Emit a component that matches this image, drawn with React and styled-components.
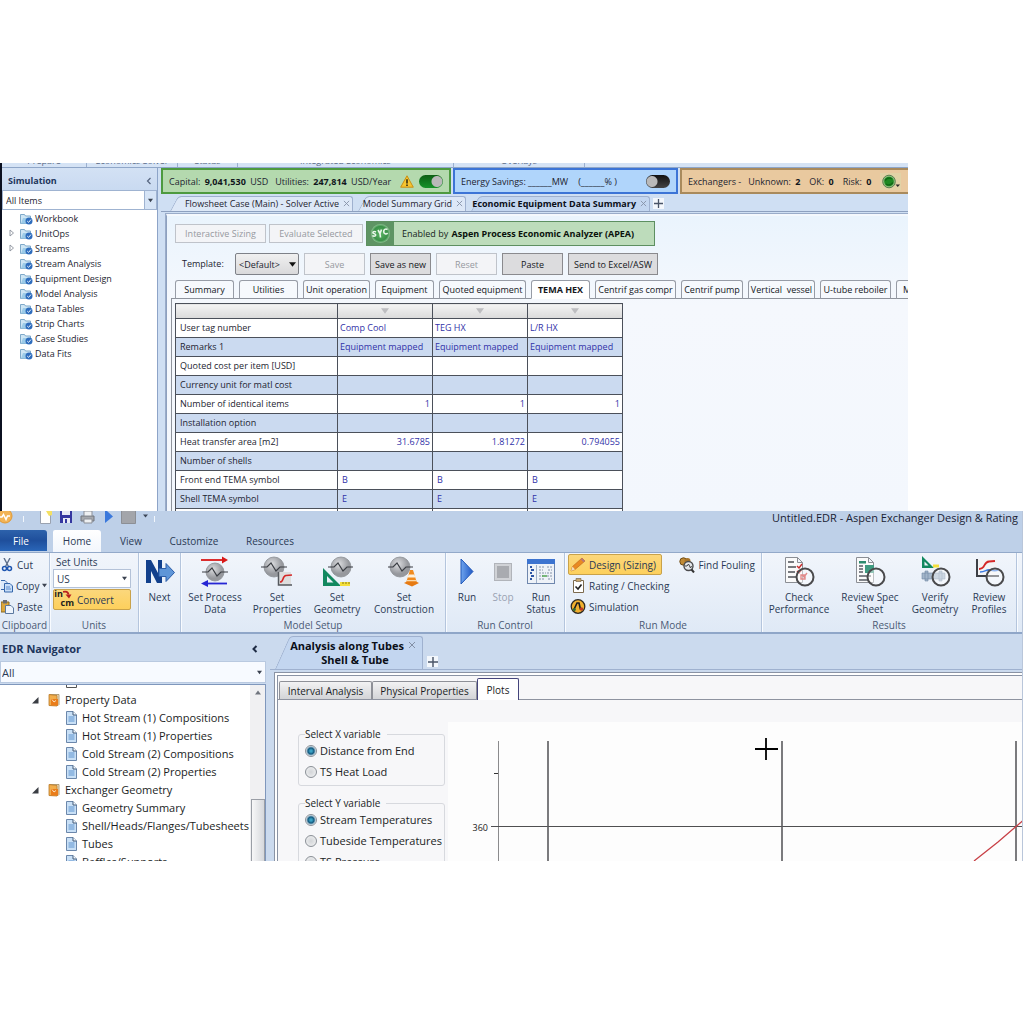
import React from 'react';
import styled, { createGlobalStyle, css } from 'styled-components';

const Global = createGlobalStyle`
  *, *::before, *::after { box-sizing: border-box; }
  body { margin: 0; background: #fff; }
  body, button, input, select { font-family: "Open Sans", "Noto Sans", sans-serif; }
  button { padding: 0; margin: 0; }
`;

const Page = styled.main`
  padding: 163px 1px 163px 0;
  overflow: hidden;
`;

/* ---------- Economics window ---------- */

const EconWindow = styled.section`
  margin-right: 115px;
  height: 348px;
  overflow: hidden;
  display: flex;
  flex-direction: column;
  border-left: 2px solid #0b1020;
  background: #cfdff3;
  font-size: 9px;
  line-height: 12px;
  color: #1d2430;
`;

const RibbonEdge = styled.div`
  flex: none;
  height: 5px;
  display: flex;
  align-items: flex-end;
  overflow: hidden;
  border-bottom: 1px solid #8fa6c8;
  background: #d5e3f5;
  color: #5a6a85;
`;

const EdgeLabel = styled.span`
  flex: 0 0 ${p => p.$w}px;
  text-align: center;
  white-space: nowrap;
  border-right: 1px solid #9bb0d0;
`;

const EconBody = styled.div`
  flex: 1;
  min-height: 0;
  display: flex;
`;

const SimPanel = styled.nav`
  flex: 0 0 156px;
  background: #fff;
  border-right: 1px solid #8da4c8;
`;

const SimHeader = styled.div`
  height: 22px;
  padding: 4px 5px 0 6px;
  display: flex;
  align-items: center;
  justify-content: space-between;
  background: linear-gradient(#d3e1f4, #c9daf1);
  color: #20355c;
  font-weight: 700;
`;

const PlainButton = styled.button`
  border: 0;
  background: none;
  color: inherit;
  font-size: inherit;
  line-height: inherit;
  display: inline-flex;
  align-items: center;
  justify-content: center;
`;

const SelectWrap = styled.label`
  display: grid;
  grid-template-columns: minmax(0, 1fr) ${p => p.$arrow || 11}px;
  align-items: center;
  height: ${p => p.$h}px;
  width: ${p => (p.$w ? `${p.$w}px` : 'auto')};
  border: 1px solid ${p => p.$line || '#9fb3d1'};
  background: ${p => p.$bg || '#fff'};
  border-radius: ${p => p.$r || 0}px;

  select {
    grid-area: 1 / 1 / 2 / 3;
    appearance: none;
    width: 100%;
    height: 100%;
    padding: 0 ${p => p.$arrow || 11}px 0 ${p => p.$pad || 3}px;
    border: 0;
    background: none;
    color: inherit;
    font-size: inherit;
  }
  svg {
    grid-area: 1 / 2;
    justify-self: center;
    pointer-events: none;
  }
`;

const SimList = styled.ul`
  margin: 0;
  padding: 1px 0 0;
  list-style: none;
`;

const SimItem = styled.li`
  height: 15px;
  padding-left: 6px;
  display: grid;
  grid-template-columns: 11px 13px 1fr;
  align-items: center;
  column-gap: 1px;

  span { padding-left: 1px; white-space: nowrap; }
`;

const EconMain = styled.div`
  flex: 1;
  min-width: 0;
  padding-left: 3px;
  display: flex;
  flex-direction: column;
`;

const StatusStrip = styled.div`
  flex: none;
  display: flex;
  gap: 2px;
  height: 26px;
`;

const tones = {
  green: ['#b4d9ae', '#4d9a3f'],
  blue: ['#b0d5fb', '#3c74d6'],
  tan: ['#e9c99f', '#a98a5c'],
};

const StatusCell = styled.div`
  flex: ${p => p.$flex};
  display: flex;
  align-items: center;
  gap: ${p => p.$gap || 3}px;
  padding: 1px 6px 0;
  white-space: nowrap;
  overflow: hidden;
  background: ${p => tones[p.$tone][0]};
  border: 2px solid ${p => tones[p.$tone][1]};
  border-right-width: ${p => (p.$tone === 'tan' ? 0 : 2)}px;

  b { font-weight: 700; color: #10151c; margin: 0 2px; }
`;

const Spacer = styled.span`
  flex: 1;
`;

const Toggle = styled.input`
  appearance: none;
  flex: none;
  margin: 0 0 0 2px;
  width: 24px;
  height: 13px;
  border-radius: 7px;
  background:
    radial-gradient(circle at 6px 50%, #b9b9b9 0 5px, transparent 6px),
    linear-gradient(#111, #444);

  &:checked {
    background:
      radial-gradient(circle at 18px 50%, #b9b9b9 0 5px, transparent 6px),
      linear-gradient(#0c5f14, #17932a);
  }
`;

const RiskButton = styled(PlainButton)`
  width: 21px;
  height: 17px;
  background: #e2d2a6;
`;

const DocTabs = styled.div`
  flex: none;
  height: 18px;
  padding-left: 4px;
  display: flex;
  align-items: flex-end;
  border-bottom: 1px solid #8da0bf;
`;

const DocTab = styled.div`
  position: relative;
  flex: 0 0 ${p => p.$w}px;
  height: ${p => p.$h || 15}px;
  display: flex;
  align-items: center;
  justify-content: flex-end;
  gap: 4px;
  padding-right: 3px;
  white-space: nowrap;
  font-weight: ${p => (p.$active ? 700 : 400)};
  color: ${p => (p.$active ? '#0b0f18' : '#1d2430')};

  &::before {
    content: "";
    position: absolute;
    inset: 0 0 0 5px;
    background: ${p => (p.$active ? '#c3d6f0' : '#dde8f7')};
    border: 1px solid #9fb1cf;
    border-bottom: 0;
    border-radius: 4px 2px 0 0;
    transform: skewX(${p => p.$skew || -28}deg);
    transform-origin: bottom;
    clip-path: inset(0 50% 0 -20px);
  }
  &::after {
    content: "";
    position: absolute;
    inset: 0 0 0 30px;
    background: ${p => (p.$active ? '#c3d6f0' : '#dde8f7')};
    border-top: 1px solid #9fb1cf;
    border-right: 1px solid #9fb1cf;
    border-radius: 0 3px 0 0;
  }
  > * { position: relative; z-index: 1; }
`;

const AddTab = styled(PlainButton)`
  margin: 0 0 2px ${p => p.$ml}px;
  width: 11px;
  height: 11px;
  background: #f3f7fc;
  color: #39465c;
`;

const EconFrame = styled.div`
  flex: 1;
  min-height: 0;
  margin: 2px 0 0 5px;
  border-top: 2px solid #f4f8fd;
  border-left: 1px solid #8da0bf;
  outline: 1px solid #9aacc9;
  padding: 5px 0 0 4px;
  background: linear-gradient(#eaf4fd, #f5f8fd 90px, #f3f7fd);
  overflow: hidden;
`;

const ToolRow = styled.div`
  display: flex;
  align-items: center;
  padding-left: ${p => p.$pl}px;
  margin-bottom: ${p => p.$mb}px;
  height: ${p => p.$h}px;
  gap: ${p => p.$gap || 5}px;
`;

const ToolButton = styled.button`
  flex: none;
  width: ${p => p.$w}px;
  height: ${p => p.$h || 22}px;
  border: 1px solid #8a8a8e;
  background: #dcdcde;
  color: #14171c;
  font-size: 9px;
  white-space: nowrap;

  &:disabled {
    border-color: #bfc3ca;
    background: #f3f4f7;
    color: #9699a0;
  }
`;

const ApeaBadge = styled.div`
  display: flex;
  align-items: center;
  gap: 8px;
  width: 289px;
  height: 25px;
  border: 1px solid #5d8f61;
  background: #bddcbb;
  color: #17251b;
  white-space: nowrap;

  b { color: #0a120c; margin-left: 1px; }
`;

const RowLabel = styled.span`
  width: 48px;
`;

const EquipTabs = styled.div`
  display: flex;
  gap: 5px;
  padding-left: 4px;
  height: 19px;
  border-bottom: 1px solid #8e939c;
`;

const EquipTab = styled.button`
  flex: 0 0 ${p => p.$w}px;
  height: 19px;
  border: 1px solid #979ca6;
  border-bottom-color: ${p => (p.$active ? '#fff' : '#8e939c')};
  border-radius: 3px 3px 0 0;
  background: ${p => (p.$active ? '#fff' : '#f6f9fd')};
  font-size: 9px;
  font-weight: ${p => (p.$active ? 700 : 400)};
  color: #14171c;
  white-space: pre;
  overflow: hidden;
`;

const GridPane = styled.div`
  border-left: 1px solid #8e939c;
  padding: 4px 0 0 3px;
`;

const EquipGrid = styled.table`
  table-layout: fixed;
  width: 448px;
  border-collapse: collapse;

  th, td {
    height: 19px;
    padding: 0 4px;
    border: 1px solid #4b505a;
    line-height: 12px;
    font-weight: 400;
    text-align: left;
    white-space: nowrap;
  }
  thead th {
    height: 15px;
    padding: 0;
    text-align: center;
    line-height: 8px;
    background: linear-gradient(#f4f4f4, #dadada);
  }
  tbody tr { background: #fff; }
  tbody tr:nth-child(even) { background: #cbdaf0; }
  td { color: #3232a8; padding: 0 2px; }
`;

const NumCell = styled.td`
  && { text-align: right; }
`;
const SymCell = styled.td`
  && { padding-left: 4px; }
`;

/* ---------- Exchanger window ---------- */

const EdrWindow = styled.section`
  height: 350px;
  overflow: hidden;
  display: flex;
  flex-direction: column;
  background: #cbdaee;
  font-size: 10px;
  line-height: 12px;
  color: #2b3a55;
  border-right: 1px solid #b9c6da;
`;

const TitleBar = styled.div`
  flex: none;
  height: 19px;
  display: flex;
  justify-content: space-between;
  background: #bed0e8;
`;

const QuickBar = styled.div`
  display: flex;
  align-items: flex-start;
  height: 14px;
`;

const TitleText = styled.h1`
  margin: 0;
  padding-right: 4px;
  font-size: 11px;
  line-height: 13px;
  font-weight: 400;
  color: #1a2233;
  white-space: nowrap;
`;

const RibbonTabs = styled.div`
  flex: none;
  display: flex;
  height: 22px;
  gap: 6px;
  background: #bed0e8;
`;

const RibbonTab = styled.button`
  flex: 0 0 ${p => p.$w}px;
  height: 22px;
  border: 0;
  border-radius: 2px 3px 0 0;
  background: none;
  font-size: 10px;
  color: #2b3a55;
  ${p => p.$file && css`
    height: 21px;
    padding-right: 5px;
    background: linear-gradient(#2d62ab, #1f4f9c 50%, #2a66b8);
    color: #fff;
    border-radius: 0 3px 0 0;
  `}
  ${p => p.$active && css`
    background: linear-gradient(#fff, #f2f6fc);
  `}
`;

const Ribbon = styled.div`
  flex: none;
  height: 82px;
  display: flex;
  border-top: 1px solid #93a9c9;
  border-bottom: 2px solid #8fa6c8;
  background: linear-gradient(#f1f5fb, #dfe9f6);
`;

const Group = styled.div`
  flex: 0 0 ${p => p.$w}px;
  display: flex;
  flex-direction: column;
  overflow: hidden;
  border-right: 1px solid #b4c5dd;
  box-shadow: 1px 0 0 #f8fbff;
`;

const GroupBody = styled.div`
  flex: 1;
  display: flex;
  justify-content: ${p => p.$justify || 'center'};
  padding: ${p => p.$pad || '3px 0 0'};
`;

const GroupLabel = styled.div`
  height: 14px;
  line-height: 14px;
  text-align: center;
  white-space: nowrap;
  color: #4b5a75;
`;

const Stack = styled.div`
  display: flex;
  flex-direction: column;
  gap: ${p => p.$gap || 0}px;
`;

const SmallButton = styled.button`
  display: inline-flex;
  align-items: center;
  align-self: flex-start;
  gap: 3px;
  height: 21px;
  width: ${p => (p.$w ? `${p.$w}px` : 'auto')};
  padding: 0 ${p => p.$px || 0}px;
  border: 1px solid ${p => (p.$on ? '#c9a24a' : 'transparent')};
  background: ${p => (p.$on ? 'linear-gradient(#fbd77c, #fdd05c)' : 'none')};
  border-radius: 2px;
  color: #2b3a55;
  font-size: 10px;
  white-space: nowrap;

  svg { flex: none; }
`;

const BigButton = styled.button`
  flex: 0 0 ${p => p.$w}px;
  display: flex;
  flex-direction: column;
  align-items: center;
  gap: 3px;
  border: 0;
  background: none;
  color: #2b3a55;
  font-size: 10px;
  line-height: 12px;

  span { white-space: pre; }
  &:disabled { color: #9aa3b3; }
`;

const FieldText = styled.span`
  padding-left: 3px;
`;

const InCm = styled.span`
  display: grid;
  grid-template-columns: 9px 11px;
  font-size: 9px;
  line-height: 8px;
  font-weight: 700;
  color: #1c1c1c;
  padding-bottom: 2px;
  i { font-style: normal; grid-column: 1 / 3; text-align: right; }
`;

const EdrBody = styled.div`
  flex: 1;
  min-height: 0;
  display: flex;
  font-size: 11px;
  line-height: 14px;
`;

const Navigator = styled.nav`
  flex: 0 0 266px;
  display: flex;
  flex-direction: column;
`;

const NavHeader = styled.div`
  flex: none;
  height: 27px;
  padding: 3px 8px 0 2px;
  display: flex;
  align-items: center;
  justify-content: space-between;
  font-weight: 700;
  color: #20355c;
`;

const TreePane = styled.div`
  flex: 1;
  min-height: 0;
  display: flex;
  margin-top: 1px;
  border: 1px solid #7f97bc;
  border-left: 0;
  border-bottom: 0;
  background: #fff;
  color: #1a1d24;
  overflow: hidden;
`;

const Tree = styled.ul`
  flex: 1;
  margin: 0;
  padding: 0;
  list-style: none;
  overflow: hidden;
`;

const TreeRow = styled.li`
  height: ${p => (p.$cut ? 6 : 18)}px;
  display: flex;
  align-items: ${p => (p.$cut ? 'flex-start' : 'center')};
  gap: 5px;
  padding-left: ${p => (p.$leaf ? 66 : 31)}px;
  white-space: nowrap;
  svg { flex: none; }
`;

const BookSlot = styled.span`
  display: flex;
  padding-left: 4px;
`;

const ScrollBar = styled.div`
  flex: 0 0 15px;
  display: flex;
  flex-direction: column;
  background: #f0f0f2;
`;

const ScrollUp = styled(PlainButton)`
  height: 15px;
`;

const ScrollThumb = styled.div`
  flex: 1;
  margin: 99px 0 0 1px;
  border: 1px solid #9a9ea6;
  border-bottom: 0;
  background: linear-gradient(90deg, #f7f7f8, #d6d8dc);
`;

const Workspace = styled.div`
  flex: 1;
  min-width: 0;
  display: flex;
  flex-direction: column;
  padding-left: 4px;
`;

const WorkTabs = styled.div`
  flex: none;
  height: 36px;
  display: flex;
  align-items: flex-end;
  border-bottom: 1px solid #9fb1cf;
`;

const WorkTitle = styled.div`
  text-align: center;
  line-height: 14px;
  white-space: nowrap;
  span { padding-left: 16px; }
`;

const CloseTab = styled(PlainButton)`
  color: #7d8ba3;
`;

const TopClose = styled(CloseTab)`
  align-self: flex-start;
  padding: 5px 4px 0 0;
`;

const WorkFrame = styled.div`
  flex: 1;
  min-height: 0;
  margin: 2px 0 0 4px;
  border: 1px solid #8a93a4;
  border-right: 0;
  border-bottom: 0;
  padding: 2px 0 0 2px;
  background: #fff;
  display: flex;
`;

const WorkInner = styled.div`
  flex: 1;
  min-width: 0;
  border: 1px solid #8a93a4;
  border-right: 0;
  border-bottom: 0;
  display: flex;
  flex-direction: column;
  background: #f7f7f9;
  overflow: hidden;
  color: #1a1d24;
`;

const SubTabs = styled.div`
  flex: none;
  height: 24px;
  padding-left: 1px;
  display: flex;
  align-items: flex-end;
  border-bottom: 1px solid #8e93a0;
`;

const SubTab = styled.button`
  flex: 0 0 ${p => p.$w}px;
  height: ${p => (p.$active ? 22 : 18)}px;
  margin-bottom: ${p => (p.$active ? -1 : 0)}px;
  border: 1px solid ${p => (p.$active ? '#45457c' : '#8e9097')};
  border-bottom: 0;
  border-radius: 2px 2px 0 0;
  background: ${p => (p.$active ? '#fff' : 'linear-gradient(#f2f2f3, #d3d4d7)')};
  color: #1a1d24;
  font-size: 10px;
  white-space: nowrap;
`;

const PlotArea = styled.div`
  flex: 1;
  min-height: 0;
  display: flex;
  padding: 22px 0 0 20px;
  gap: 3px;
`;

const Options = styled.div`
  flex: 0 0 147px;
  display: flex;
  flex-direction: column;
  gap: 11px;
  padding-top: 6px;
`;

const OptionSet = styled.fieldset`
  margin: 0;
  padding: 0 0 3px 6px;
  border: 1px solid #d7d9de;
  border-radius: 3px;
  font-size: 10px;

  legend { padding: 0 6px 0 0; line-height: 12px; }
`;

const Option = styled.label`
  display: flex;
  align-items: center;
  gap: 3px;
  height: 21px;
  font-size: 11px;
  white-space: nowrap;
`;

const Radio = styled.input`
  appearance: none;
  margin: 0;
  width: 12px;
  height: 12px;
  flex: none;
  border: 1px solid #8b9097;
  border-radius: 50%;
  background: radial-gradient(circle, #d3d5d8, #f3f4f5);

  &:checked {
    background: radial-gradient(circle at 50% 50%, #3aa3c6 0 1px, #145a80 3px, #e4ecf2 5px);
  }
`;

const ChartBox = styled.div`
  flex: 1;
  min-width: 0;
  background: #fdfdfd;
  overflow: hidden;
  svg { display: block; }
`;

/* ---------- Drawings ---------- */

const Down = ({ s = 5, c = '#3b4250' }) => (
  <svg width={s} height={s} viewBox="0 0 6 6"><path d="M0 1h6L3 5z" fill={c} /></svg>
);
const Cross = ({ s = 7 }) => (
  <svg width={s} height={s} viewBox="0 0 8 8"><path d="M1 1l6 6M7 1L1 7" stroke="#8390a6" strokeWidth="1" /></svg>
);
const Plus = ({ s = 9 }) => (
  <svg width={s} height={s} viewBox="0 0 9 9"><path d="M4.5 0v9M0 4.5h9" stroke="#4a5568" strokeWidth="1.3" /></svg>
);
const Chevron = ({ w = 1.2, c = '#56657f' }) => (
  <svg width="6" height="8" viewBox="0 0 6 8"><path d="M4.5 1L1.5 4l3 3" fill="none" stroke={c} strokeWidth={w} /></svg>
);
const FolderCheck = () => (
  <svg width="13" height="12" viewBox="0 0 13 12">
    <path d="M.5 10.5v-9h4l1 1.5h5v7.500z" fill="#cfe6f4" stroke="#7fa9c9" />
    <path d="M1 10.500L3 5h9l-2 5.500z" fill="#9ccbe8" />
    <circle cx="9" cy="8" r="3.500" fill="#2f6dbd" />
    <path d="M7.200 8l1.400 1.400L11 6.500" fill="none" stroke="#e8f2fc" strokeWidth="1" />
  </svg>
);
const Warning = () => (
  <svg width="14" height="13" viewBox="0 0 14 13">
    <path d="M7 .8L13.300 12.200H.7z" fill="#f6c52f" stroke="#c98f16" />
    <path d="M7 4.200v4.300M7 9.600v1.500" stroke="#2b2410" strokeWidth="1.500" />
  </svg>
);
const RiskDial = () => (
  <svg width="20" height="16" viewBox="0 0 20 16">
    <circle cx="8" cy="7.500" r="6.300" fill="#8fbf7d" stroke="#5b7f52" />
    <circle cx="8" cy="7.500" r="4.800" fill="#1c8a22" />
    <path d="M4 6.500c2-2.500 5-3 7-1.500M12 8.500c-2 2.500-5 3-7 1.500" fill="none" stroke="#0f6a17" strokeWidth="1.500" />
    <path d="M14.500 10.500h4.500l-2.250 2.500z" fill="#2b2b2b" />
  </svg>
);
const Sync = () => (
  <svg width="27" height="23" viewBox="0 0 27 23">
    <defs><radialGradient id="sync"><stop offset="0" stopColor="#5bb565" /><stop offset=".75" stopColor="#3b9149" /><stop offset="1" stopColor="#8cc492" /></radialGradient></defs>
    <rect width="27" height="23" fill="#5e9464" />
    <circle cx="13.500" cy="11.500" r="9.500" fill="url(#sync)" />
    <path d="M9 10c-2-1-3.500 0-3 1s3 .7 2.700 2.200-2.700 1.300-3.200.2M11 8l2 3.500 1.500-4M13 11.500l.5 4M20.500 7.500c-2-1.200-4 0-3.800 2.200s2.300 3 4 1.500" fill="none" stroke="#e9f6ea" strokeWidth="1.600" />
  </svg>
);
const Caret = ({ open }) => (
  <svg width="8" height="8" viewBox="0 0 8 8">
    {open ? <path d="M7.500 1v6.500H1z" fill="#3a3d44" /> : <path d="M2 1l3.500 3L2 7z" fill="#fff" stroke="#8b919c" strokeWidth=".9" />}
  </svg>
);
const Book = () => (
  <svg width="12" height="14" viewBox="0 0 12 14">
    <path d="M2 1.500h9v10l-1 1H2z" fill="#efe0c2" stroke="#a08a60" strokeWidth=".8" />
    <path d="M1 1.500l8 1v10.500L1 12.500z" fill="#f2ae4c" stroke="#b87828" strokeWidth=".8" />
    <path d="M3 6h7v6.500H3z" fill="#ea7d1b" /><path d="M4 6.500l2 2.500 2-1.500" stroke="#fbe3c0" fill="none" />
  </svg>
);
const Doc = () => (
  <svg width="11" height="14" viewBox="0 0 11 14">
    <path d="M.5.5H7L10.500 4v9.500H.5z" fill="#c9e0f6" stroke="#6b87ab" />
    <path d="M7 .5V4h3.500" fill="#fff" stroke="#3f5878" />
    <path d="M2.500 6h6M2.500 8h6M2.500 10h6" stroke="#5c93cf" />
  </svg>
);
const Exchanger = ({ x, y, r = 10 }) => (
  <g transform={`translate(${x} ${y})`}>
    <circle r={r} fill="url(#ball)" stroke="#8c8f94" strokeWidth=".8" />
    <path d="M-13 0h6l4-4 5 8 4-4h7" fill="none" stroke="#3c3f45" strokeWidth="1.200" />
  </g>
);
const Defs = () => (
  <defs>
    <radialGradient id="ball" cx=".4" cy=".35"><stop offset="0" stopColor="#dcdde0" /><stop offset="1" stopColor="#96989d" /></radialGradient>
    <linearGradient id="blueFill" x2="1"><stop offset="0" stopColor="#6ea4ee" /><stop offset="1" stopColor="#1f57c4" /></linearGradient>
  </defs>
);
const Art = ({ w = 32, children }) => (
  <svg width={w} height="32" viewBox={`0 0 ${w} 32`}><Defs />{children}</svg>
);
const NextArt = () => (
  <Art>
    <path d="M2 27V4h5l7 13V4h4v23h-5L7 15v12z" fill="#12408c" />
    <path d="M15 12.500h7V7.500l8.500 9-8.500 9v-5h-7z" fill="#5f96d8" stroke="#2c5da8" />
  </Art>
);
const ProcessArt = () => (
  <Art>
    <path d="M2 4h23" stroke="#d81818" strokeWidth="1.800" /><path d="M23 .5l6 3.500-6 3.500z" fill="#d81818" />
    <Exchanger x={16} y={16} r={9} />
    <path d="M7 27.500h21" stroke="#2626d4" strokeWidth="1.800" /><path d="M9 24l-7 3.500 7 3.500z" fill="#2626d4" />
  </Art>
);
const PropertiesArt = () => (
  <Art><Exchanger x={13} y={11} /><rect x="17" y="16" width="13" height="13" fill="#dedede" /><path d="M17.500 16v13H31" fill="none" stroke="#55585e" strokeWidth="1.500" /><path d="M19 26c4 0 2-6 6-6.500l6-.5" fill="none" stroke="#d42626" strokeWidth="1.600" /></Art>
);
const GeometryArt = () => (
  <Art><Exchanger x={20} y={11} /><path fillRule="evenodd" d="M2 12v18h18zM6 20v6.500h6.500z" fill="#12885f" /><path d="M19 26h10v4H19z" fill="#f4df3c" /><path d="M22 26v2M25 26v2M28 26v2" stroke="#8b7d10" /></Art>
);
const ConstructionArt = () => (
  <Art><Exchanger x={12} y={11} /><path d="M22 14h3l4 13H18z" fill="#f08a1e" /><path d="M20.500 18.500h6l.9 3h-7.800z" fill="#fff0d8" /><path d="M19 24h9l.6 1.500H18.500z" fill="#fbd9a8" /><path d="M16 27l3-1.500h9l3 1.500-7 3.500z" fill="#e67a12" /></Art>
);
const RunArt = () => <Art><path d="M10 3l12 12.500L10 28z" fill="url(#blueFill)" stroke="#1f56b8" /></Art>;
const StopArt = () => <Art><rect x="7.500" y="7.500" width="17" height="17" fill="#d0d2d6" stroke="#b1b4ba" /><rect x="10" y="10" width="12" height="12" fill="#a9abb0" /></Art>;
const StatusArt = () => (
  <Art><rect x="2.500" y="3.500" width="27" height="24" fill="#eef2f8" stroke="#6f87ad" /><path d="M2 3h28v5H2z" fill="#3d74d0" /><path d="M5 11h2M6 14h3M5 17h2M6 20h3M5 23h2" stroke="#2d55a5" strokeWidth="1.800" /><path d="M11.500 9v18" stroke="#9fb0c8" /><path d="M14 11h6M14 14h4M14 17h7M14 20h4M14 23h6M22 11h5M23 14h4M22 17h5M22 20h5M23 23h4" stroke="#8492a8" strokeDasharray="2 1" /><path d="M17 20h5" stroke="#51a351" strokeWidth="1.500" /></Art>
);
const Lens = () => <circle cx="22" cy="21" r="8.500" fill="#fff" fillOpacity=".45" stroke="#4a4a4c" strokeWidth="2" />;
const Sheet = () => <path d="M2.500 1.500h12l5 5v20h-17zM14.500 1.500v5h5" fill="#fafafa" stroke="#8b8e94" />;
const CheckArt = () => (
  <Art><Sheet /><path d="M5 6h6M5 11h8M5 16h7M5 21h8" stroke="#4d5056" strokeWidth="1.600" /><path d="M14 10l2 2 3-4M14 15l2 2 3-4M18 23v-4h4v4zM19 19l2 2 3-4" fill="none" stroke="#c92b2b" strokeWidth="1.400" /><Lens /></Art>
);
const SpecArt = () => (
  <Art><Sheet /><path d="M5 5h7v2.500H5z" fill="#2c8b6e" /><path d="M11 9h9v8h-9z" fill="#3f9a80" /><path d="M5 10h4M5 13h4M5 16h4M5 20h12M5 24h10" stroke="#5a5e66" strokeWidth="1.400" /><Lens /></Art>
);
const VerifyArt = () => (
  <Art><path fillRule="evenodd" d="M3 0v12h12zM5.500 5.500V9.500H9.500z" fill="#12885f" /><path d="M14 8.500h6v3h-6z" fill="#f4df3c" /><path d="M3 17h23v6H3zM6 15h3v10H6zM20 15h3v10h-3z" fill="#a3b6ca" stroke="#6f88a3" strokeWidth=".6" /><Lens /></Art>
);
const ProfilesArt = () => (
  <Art><path d="M4 3h20v17H4z" fill="#f3f3f5" /><path d="M4 3v17h22" fill="none" stroke="#3c3f45" strokeWidth="2" /><path d="M6 13c7 0 4-7 10-7.500l6-.5" fill="none" stroke="#d42626" strokeWidth="1.800" /><path d="M7 16c6 0 6-3 10-2s6 1 8 0" fill="none" stroke="#3d7be0" strokeWidth="1.600" /><Lens /></Art>
);
const Scissors = () => (
  <svg width="13" height="14" viewBox="0 0 13 14"><path d="M3 0l4.500 8.500M9 0L4.500 8.500" stroke="#5e6f8a" strokeWidth="1.400" /><circle cx="3.500" cy="10.500" r="2" fill="none" stroke="#1f56b0" strokeWidth="1.500" /><circle cx="8.500" cy="10.500" r="2" fill="none" stroke="#1f56b0" strokeWidth="1.500" /></svg>
);
const CopyIcon = () => (
  <svg width="12" height="14" viewBox="0 0 12 14"><path d="M0 1.500h4l2 2v7H0" fill="#dceafa" stroke="#3567ab" /><path d="M3.500 4.500H9l2.500 2.500v6h-8z" fill="#c7ddf7" stroke="#3567ab" /><path d="M5 8h4M5 10h5" stroke="#5a8ccd" /></svg>
);
const PasteIcon = () => (
  <svg width="13" height="14" viewBox="0 0 13 14"><path d="M0 2h8v10H0z" fill="#dca73c" stroke="#8a6a25" /><path d="M2 0h4v3.500H2z" fill="#6a6d74" /><path d="M4.500 5.500H10l2.500 2.500v5.500h-8z" fill="#eef4fc" stroke="#5b789f" /></svg>
);
const PencilIcon = () => (
  <svg width="16" height="15" viewBox="0 0 16 15"><path d="M1 14l1.500-4.500L12 1l3 3L5 12.500z" fill="#e98a22" stroke="#b9631a" strokeWidth=".6" /><path d="M12 1l3 3-1.500 1.300-3-3z" fill="#b87878" /><path d="M1 14l1.500-4.500L5 12.500z" fill="#f0dcb8" /></svg>
);
const ClipboardIcon = () => (
  <svg width="16" height="15" viewBox="0 0 16 15"><path d="M3.500 2.500h10v12h-10z" fill="#fff" stroke="#7c6a4e" /><path d="M6 .5h5v3H6z" fill="#c9a66c" stroke="#7c6a4e" strokeWidth=".7" /><path d="M5.500 8.500l2.500 2.500 3.500-4.500" fill="none" stroke="#222" strokeWidth="1.600" /></svg>
);
const SimulationIcon = () => (
  <svg width="16" height="15" viewBox="0 0 16 15"><circle cx="8" cy="7.500" r="6.800" fill="#f0b02f" stroke="#2e2a22" strokeWidth="1.300" /><path d="M4 10.500L7 4l2 0 1.500 6.500" fill="none" stroke="#1c1c1c" strokeWidth="1.600" /><circle cx="4.300" cy="10.500" r="1.500" fill="#2f6e34" /><circle cx="11.500" cy="10" r="1.700" fill="#c23a22" /></svg>
);
const FoulingIcon = () => (
  <svg width="16" height="16" viewBox="0 0 16 16"><circle cx="4.500" cy="4.500" r="3.700" fill="#c08a35" stroke="#6e4c18" /><circle cx="8.500" cy="4" r="3" fill="#a8752b" /><circle cx="9.500" cy="9" r="4.500" fill="#e4e6ea" stroke="#4b4b4d" strokeWidth="1.400" /><path d="M6 9h2l1.500-2 2 4 1-2" stroke="#444" fill="none" /><path d="M12.500 12.500l2.500 3" stroke="#333" strokeWidth="2" /></svg>
);
const ConvertArrow = () => (
  <svg width="10" height="9" viewBox="0 0 10 9"><path d="M0 2c3-1 5 0 5.500 2.500" fill="none" stroke="#b82020" strokeWidth="1.800" /><path d="M2.500 4.500h6l-2.500 4z" fill="#b82020" /></svg>
);
const QuickIcons = () => (
  <svg width="155" height="14" viewBox="0 0 155 14">
    <circle cx="5" cy="5" r="7" fill="#f2b355" stroke="#e19a35" /><path d="M0 6h2l1.500-2.500L6 8.500 7.500 5H10" stroke="#fff" fill="none" strokeWidth="1.500" />
    <path d="M23.500 5v6" stroke="#f1f6fc" />
    <path d="M40.500 0v12.500h10V0" fill="#fff" stroke="#9aa2b0" /><path d="M46 0h6v4l-3 1z" fill="#f4e063" />
    <path d="M60 0v12h12V0z" fill="#3537a0" /><path d="M62 0h8v4h-8zM63 7h7v5h-7z" fill="#e8eaf5" /><path d="M65 8h2v4h-2z" fill="#3537a0" />
    <path d="M81 5h13v5H81z" fill="#a5a8ad" stroke="#70747c" /><path d="M84 0h8v5h-8zM84 8h8v4h-8z" fill="#eef0f2" stroke="#8b8f97" />
    <path d="M105 0v12l8-6.500L107 0z" fill="#3a78dc" />
    <path d="M121.500 0v12.500h14V0" fill="#a3a5aa" stroke="#8c8f95" />
    <path d="M143 3.500h5l-2.500 3z" fill="#3c4556" /><path d="M154.500 5v6" stroke="#f1f6fc" />
  </svg>
);

const Chart = () => (
  <svg width="575" height="139" viewBox="0 0 575 139">
    <path d="M50.500 19v120" stroke="#8b8b8d" />
    <path d="M46 51.500h4" stroke="#333" />
    <path d="M43 104.500h532" stroke="#4f4f51" />
    <path d="M100 19v120M334 19v120M568 19v120" stroke="#5b5b5e" strokeWidth="1.600" />
    <path d="M526 139l24-19 18-15.500 7-6" fill="none" stroke="#c84046" strokeWidth="1.300" />
    <path d="M318 16v22M307 27h23" stroke="#000" strokeWidth="1.800" />
    <text x="40" y="109" textAnchor="end" fontSize="9" fontFamily="Open Sans, sans-serif" fill="#222">360</text>
  </svg>
);

/* ---------- Data ---------- */

const edgeLabels = [['Prepare', 85], ['Economics Solver', 91], ['Status', 60], ['Integrated Economics', 216], ['Overlays', 131]];
const simItems = ['Workbook', 'UnitOps', 'Streams', 'Stream Analysis', 'Equipment Design', 'Model Analysis', 'Data Tables', 'Strip Charts', 'Case Studies', 'Data Fits'];
const equipTabs = [['Summary', 59], ['Utilities', 59], ['Unit operation', 67], ['Equipment', 59], ['Quoted equipment', 87], ['TEMA HEX', 59], ['Centrif gas compr', 81], ['Centrif pump', 62], ['Vertical  vessel', 67], ['U-tube reboiler', 71], ['Multi stage', 60]];
const gridRows = [
  ['User tag number', 'text', 'Comp Cool', 'TEG HX', 'L/R HX'],
  ['Remarks 1', 'text', 'Equipment mapped', 'Equipment mapped', 'Equipment mapped'],
  ['Quoted cost per item [USD]', 'text', '', '', ''],
  ['Currency unit for matl cost', 'text', '', '', ''],
  ['Number of identical items', 'num', '1', '1', '1'],
  ['Installation option', 'text', '', '', ''],
  ['Heat transfer area [m2]', 'num', '31.6785', '1.81272', '0.794055'],
  ['Number of shells', 'text', '', '', ''],
  ['Front end TEMA symbol', 'sym', 'B', 'B', 'B'],
  ['Shell TEMA symbol', 'sym', 'E', 'E', 'E'],
  ['', 'text', '', '', ''],
];
const cellKinds = { text: 'td', num: NumCell, sym: SymCell };
const tree = [
  ['Property Data', false],
  ['Hot Stream (1) Compositions', true],
  ['Hot Stream (1) Properties', true],
  ['Cold Stream (2) Compositions', true],
  ['Cold Stream (2) Properties', true],
  ['Exchanger Geometry', false],
  ['Geometry Summary', true],
  ['Shell/Heads/Flanges/Tubesheets', true],
  ['Tubes', true],
  ['Baffles/Supports', true],
];
const splitArrow = 'linear-gradient(90deg, #fff calc(100% - 12px), #9fb3d1 calc(100% - 12px) calc(100% - 11px), #d6e4f6 calc(100% - 11px))';

function EconomicsView() {
  return (
    <EconWindow>
      <RibbonEdge>{edgeLabels.map(([t, w]) => <EdgeLabel key={t} $w={w}>{t}</EdgeLabel>)}</RibbonEdge>
      <EconBody>
        <SimPanel>
          <SimHeader>Simulation<PlainButton aria-label="Collapse"><Chevron /></PlainButton></SimHeader>
          <SelectWrap $h={20} $bg={splitArrow}>
            <select aria-label="Items"><option>All Items</option></select><Down />
          </SelectWrap>
          <SimList>
            {simItems.map((t, i) => (
              <SimItem key={t}><i>{(i === 1 || i === 2) && <Caret />}</i><FolderCheck /><span>{t}</span></SimItem>
            ))}
          </SimList>
        </SimPanel>
        <EconMain>
          <StatusStrip>
            <StatusCell $tone="green" $flex="0 0 290px">
              <span>Capital:&nbsp;<b>9,041,530</b> USD&nbsp;&nbsp; Utilities:&nbsp;<b>247,814</b> USD/Year</span>
              <Spacer /><Warning /><Toggle type="checkbox" role="switch" aria-label="Economics" defaultChecked />
            </StatusCell>
            <StatusCell $tone="blue" $flex="0 0 225px" $gap={10}>
              <span>Energy Savings: ______MW</span><span>(______% )</span>
              <Spacer /><Toggle type="checkbox" role="switch" aria-label="Energy" />
            </StatusCell>
            <StatusCell $tone="tan" $flex="1" $gap={7}>
              <span>Exchangers -</span><span>Unknown: <b>2</b></span><span>OK: <b>0</b></span><span>Risk: <b>0</b></span>
              <RiskButton aria-label="Exchanger risk"><RiskDial /></RiskButton>
            </StatusCell>
          </StatusStrip>
          <DocTabs>
            <DocTab $w={188}><span>Flowsheet Case (Main) - Solver Active</span><CloseTab aria-label="Close"><Cross /></CloseTab></DocTab>
            <DocTab $w={113}><span>Model Summary Grid</span><CloseTab aria-label="Close"><Cross /></CloseTab></DocTab>
            <DocTab $w={184} $active><span>Economic Equipment Data Summary</span><CloseTab aria-label="Close"><Cross /></CloseTab></DocTab>
            <AddTab $ml={3} aria-label="New tab"><Plus /></AddTab>
          </DocTabs>
          <EconFrame>
            <ToolRow $h={25} $mb={7} $pl={4} $gap={3}>
              <ToolButton $w={91} $h={19} disabled>Interactive Sizing</ToolButton>
              <ToolButton $w={94} $h={19} disabled>Evaluate Selected</ToolButton>
              <ApeaBadge><Sync /><span>Enabled by <b>Aspen Process Economic Analyzer (APEA)</b></span></ApeaBadge>
            </ToolRow>
            <ToolRow $h={22} $mb={5} $pl={11}>
              <RowLabel>Template:</RowLabel>
              <SelectWrap $h={22} $w={64} $bg="linear-gradient(#f0f0f0,#d9d9db)" $line="#7e8188" $r={2}>
                <select aria-label="Template"><option>&lt;Default&gt;</option></select><Down s={7} c="#111" />
              </SelectWrap>
              <ToolButton $w={61} disabled>Save</ToolButton>
              <ToolButton $w={61}>Save as new</ToolButton>
              <ToolButton $w={61} disabled>Reset</ToolButton>
              <ToolButton $w={61}>Paste</ToolButton>
              <ToolButton $w={90}>Send to Excel/ASW</ToolButton>
            </ToolRow>
            <EquipTabs>
              {equipTabs.map(([t, w]) => <EquipTab key={t} $w={w} $active={t === 'TEMA HEX'}>{t}</EquipTab>)}
            </EquipTabs>
            <GridPane>
              <EquipGrid>
                <colgroup><col width="162" /><col width="95" /><col width="95" /><col width="95" /></colgroup>
                <thead><tr><th aria-label="Property" />{[0, 1, 2].map(i => <th key={i}><Down s={8} c="#bdbdc0" /></th>)}</tr></thead>
                <tbody>
                  {gridRows.map(([label, kind, ...vals], r) => {
                    const Cell = cellKinds[kind];
                    return <tr key={r}><th scope="row">{label}</th>{vals.map((v, i) => <Cell key={i}>{v}</Cell>)}</tr>;
                  })}
                </tbody>
              </EquipGrid>
            </GridPane>
          </EconFrame>
        </EconMain>
      </EconBody>
    </EconWindow>
  );
}

const Big = ({ art, w, disabled, children }) => (
  <BigButton $w={w} disabled={disabled}>{art}<span>{children}</span></BigButton>
);

function ExchangerView() {
  return (
    <EdrWindow>
      <TitleBar>
        <QuickBar><QuickIcons /></QuickBar>
        <TitleText>Untitled.EDR - Aspen Exchanger Design &amp; Rating</TitleText>
      </TitleBar>
      <RibbonTabs>
        <RibbonTab $w={47} $file>File</RibbonTab>
        <RibbonTab $w={48} $active>Home</RibbonTab>
        <RibbonTab $w={48}>View</RibbonTab>
        <RibbonTab $w={66}>Customize</RibbonTab>
        <RibbonTab $w={74}>Resources</RibbonTab>
      </RibbonTabs>
      <Ribbon>
        <Group $w={50}>
          <GroupBody $justify="flex-start" $pad="1px 0 0">
            <Stack>
              <SmallButton><Scissors />Cut</SmallButton>
              <SmallButton><CopyIcon />Copy<Down /></SmallButton>
              <SmallButton><PasteIcon />Paste</SmallButton>
            </Stack>
          </GroupBody>
          <GroupLabel>Clipboard</GroupLabel>
        </Group>
        <Group $w={89}>
          <GroupBody $justify="flex-start" $pad="3px 0 0 3px">
            <Stack $gap={1}>
              <FieldText id="units">Set Units</FieldText>
              <SelectWrap $h={19} $w={78} $line="#b4c2d8">
                <select aria-labelledby="units"><option>US</option></select><Down />
              </SelectWrap>
              <SmallButton $on $w={78}><InCm>in<ConvertArrow /><i>cm</i></InCm>Convert</SmallButton>
            </Stack>
          </GroupBody>
          <GroupLabel>Units</GroupLabel>
        </Group>
        <Group $w={42}>
          <GroupBody><Big w={42} art={<NextArt />}>Next</Big></GroupBody>
        </Group>
        <Group $w={265}>
          <GroupBody $justify="flex-start">
            <Big w={68} art={<ProcessArt />}>{'Set Process\nData'}</Big>
            <Big w={56} art={<PropertiesArt />}>{'Set\nProperties'}</Big>
            <Big w={64} art={<GeometryArt />}>{'Set\nGeometry'}</Big>
            <Big w={70} art={<ConstructionArt />}>{'Set\nConstruction'}</Big>
          </GroupBody>
          <GroupLabel>Model Setup</GroupLabel>
        </Group>
        <Group $w={119}>
          <GroupBody>
            <Big w={36} art={<RunArt />}>Run</Big>
            <Big w={36} disabled art={<StopArt />}>Stop</Big>
            <Big w={40} art={<StatusArt />}>{'Run\nStatus'}</Big>
          </GroupBody>
          <GroupLabel>Run Control</GroupLabel>
        </Group>
        <Group $w={197}>
          <GroupBody $justify="flex-start" $pad="1px 0 0 3px">
            <Stack>
              <SmallButton $on $w={94} $px={1}><PencilIcon />Design (Sizing)</SmallButton>
              <SmallButton $px={1}><ClipboardIcon />Rating / Checking</SmallButton>
              <SmallButton $px={1}><SimulationIcon />Simulation</SmallButton>
            </Stack>
            <SmallButton $px={7}><FoulingIcon />Find Fouling</SmallButton>
          </GroupBody>
          <GroupLabel>Run Mode</GroupLabel>
        </Group>
        <Group $w={255}>
          <GroupBody>
            <Big w={70} art={<CheckArt />}>{'Check\nPerformance'}</Big>
            <Big w={72} art={<SpecArt />}>{'Review Spec\nSheet'}</Big>
            <Big w={58} art={<VerifyArt />}>{'Verify\nGeometry'}</Big>
            <Big w={50} art={<ProfilesArt />}>{'Review\nProfiles'}</Big>
          </GroupBody>
          <GroupLabel>Results</GroupLabel>
        </Group>
      </Ribbon>
      <EdrBody>
        <Navigator>
          <NavHeader>EDR Navigator<PlainButton aria-label="Collapse"><Chevron w={2} c="#1f2c45" /></PlainButton></NavHeader>
          <SelectWrap $h={22} $pad={1} $line="#b9c9e0" $bg="#f7faff">
            <select aria-label="Navigator filter"><option>All</option></select><Down />
          </SelectWrap>
          <TreePane>
            <Tree>
              <TreeRow $leaf $cut><svg width="11" height="3" viewBox="0 0 11 3"><path d="M.5 0v2.500h10V0" fill="none" stroke="#555" /></svg></TreeRow>
              {tree.map(([t, leaf]) => (
                <TreeRow key={t} $leaf={leaf}>{leaf ? <Doc /> : <><Caret open /><BookSlot><Book /></BookSlot></>}<span>{t}</span></TreeRow>
              ))}
            </Tree>
            <ScrollBar><ScrollUp aria-label="Scroll up"><svg width="6" height="5" viewBox="0 0 6 5"><path d="M0 4.500h6L3 .5z" fill="#70757e" /></svg></ScrollUp><ScrollThumb /></ScrollBar>
          </TreePane>
        </Navigator>
        <Workspace>
          <WorkTabs>
            <DocTab $w={153} $h={33} $active $skew={-24}>
              <WorkTitle>Analysis along Tubes<br /><span>Shell &amp; Tube</span></WorkTitle>
              <TopClose aria-label="Close"><Cross s={8} /></TopClose>
            </DocTab>
            <AddTab $ml={4} aria-label="New tab"><Plus s={10} /></AddTab>
          </WorkTabs>
          <WorkFrame>
            <WorkInner>
              <SubTabs>
                <SubTab $w={93}>Interval Analysis</SubTab>
                <SubTab $w={105}>Physical Properties</SubTab>
                <SubTab $w={42} $active>Plots</SubTab>
              </SubTabs>
              <PlotArea>
                <Options>
                  <OptionSet>
                    <legend>Select X variable</legend>
                    <Option><Radio type="radio" name="x" defaultChecked />Distance from End</Option>
                    <Option><Radio type="radio" name="x" />TS Heat Load</Option>
                  </OptionSet>
                  <OptionSet>
                    <legend>Select Y variable</legend>
                    <Option><Radio type="radio" name="y" defaultChecked />Stream Temperatures</Option>
                    <Option><Radio type="radio" name="y" />Tubeside Temperatures</Option>
                    <Option><Radio type="radio" name="y" />TS Pressure</Option>
                  </OptionSet>
                </Options>
                <ChartBox><Chart /></ChartBox>
              </PlotArea>
            </WorkInner>
          </WorkFrame>
        </Workspace>
      </EdrBody>
    </EdrWindow>
  );
}

export default function App() {
  return (
    <Page>
      <Global />
      <EconomicsView />
      <ExchangerView />
    </Page>
  );
}
